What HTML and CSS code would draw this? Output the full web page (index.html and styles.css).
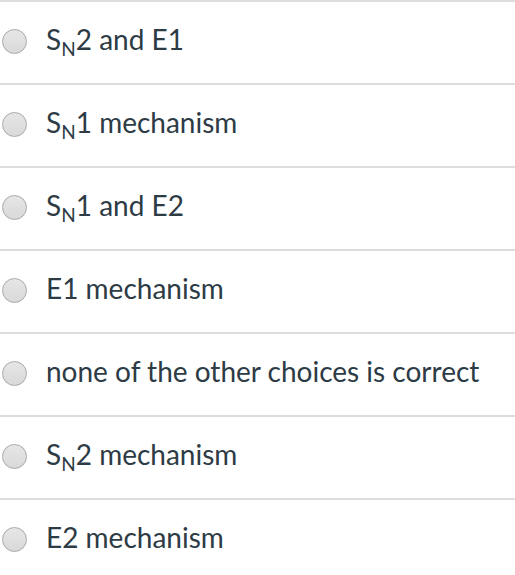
FILE: index.html
```html
<!DOCTYPE html>
<html>
<head>
<meta charset="utf-8">
<link rel="stylesheet" href="styles.css">
</head>
<body>
<ul class="answers">
  <li class="answer"><span class="radio"></span><span class="label">S<sub>N</sub>2 and E1</span></li>
  <li class="answer"><span class="radio"></span><span class="label">S<sub>N</sub>1 mechanism</span></li>
  <li class="answer"><span class="radio"></span><span class="label">S<sub>N</sub>1 and E2</span></li>
  <li class="answer"><span class="radio"></span><span class="label">E1 mechanism</span></li>
  <li class="answer"><span class="radio"></span><span class="label">none of the other choices is correct</span></li>
  <li class="answer"><span class="radio"></span><span class="label">S<sub>N</sub>2 mechanism</span></li>
  <li class="answer"><span class="radio"></span><span class="label">E2 mechanism</span></li>
</ul>
</body>
</html>
```
FILE: styles.css
```css
html, body {
  margin: 0;
  padding: 0;
  background: #fff;
}
.answers {
  list-style: none;
  margin: 0;
  padding: 0;
  font-family: Lato, "Open Sans", sans-serif;
  color: #2d3b45;
}
.answer {
  display: flex;
  align-items: center;
  height: 81px;
  border-top: 2px solid #dddddd;
}
.radio {
  box-sizing: border-box;
  width: 25px;
  height: 25px;
  margin-left: 2px;
  margin-top: -2px;
  border-radius: 50%;
  border: 1px solid #a9a9a9;
  background: linear-gradient(#e6e6e6, #d9d9d9);
  flex: none;
}
.label {
  margin-left: 19px;
  font-size: 28px;
  line-height: 1;
  margin-top: -7px;
}
.label sub {
  font-size: 19px;
  vertical-align: -6px;
  line-height: 0;
}
```
